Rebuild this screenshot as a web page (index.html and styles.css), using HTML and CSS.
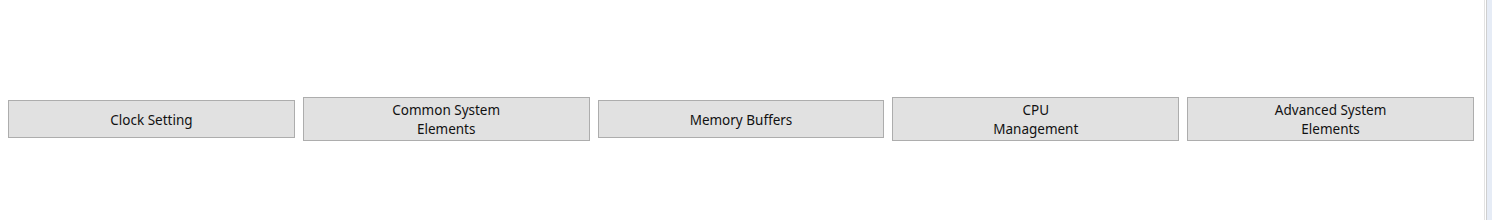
FILE: index.html
```html
<!DOCTYPE html>
<html>

<head>
  <title>System Configuration</title>
  <link rel="stylesheet" href="styles.css">
</head>

<body>
  <div class="page">
    <div class="content">
      <div class="buttons">
        <button class="btn">Clock Setting</button>
        <button class="btn tall">Common System<br>Elements</button>
        <button class="btn">Memory Buffers</button>
        <button class="btn tall">CPU<br>Management</button>
        <button class="btn tall">Advanced System<br>Elements</button>
      </div>
    </div>
    <div class="scrollbar"></div>
  </div>
</body>

</html>
```

FILE: styles.css
```css
body {
  margin: 0;
  background: #fff;
  font-family: "Noto Sans", "Open Sans", sans-serif;
}

.page {
  display: flex;
  height: 220px;
}

.content {
  flex-grow: 1;
  display: flex;
  align-items: center;
  padding: 18px 9px 0 8px;
}

.buttons {
  flex-grow: 1;
  display: flex;
  align-items: center;
  gap: 8px;
}

.btn {
  flex: 1 1 0;
  height: 38px;
  margin: 0;
  padding: 3px 0 0;
  background: #e1e1e1;
  border: 1px solid #adadad;
  border-radius: 0;
  color: #111;
  font-family: inherit;
  font-size: 13.5px;
  line-height: 19px;
}

.btn.tall {
  height: 44px;
  padding-top: 1px;
}

.scrollbar {
  width: 9px;
  flex-shrink: 0;
  background: linear-gradient(to right, #fff 0, #fff 1px, #e3e3e3 1px, #e3e3e3 2px, #fff 2px, #fff 3px, #cfcfcf 3px, #cfcfcf 4px, #e6ecf6 4px);
}
```
